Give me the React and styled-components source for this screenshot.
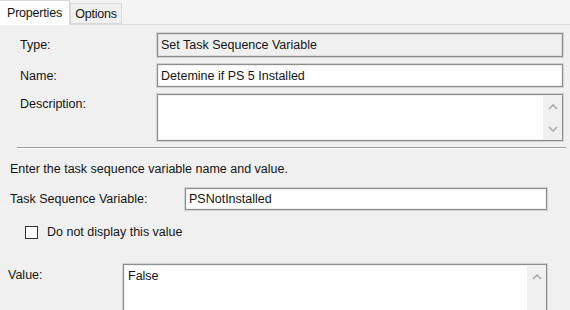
import React from 'react';
import styled, { createGlobalStyle } from 'styled-components';

const GlobalStyle = createGlobalStyle`
  html, body {
    margin: 0;
    padding: 0;
    background: #f0f0f0;
  }
  body {
    font-family: 'Liberation Sans', Arial, sans-serif;
    font-size: 12.5px;
    color: #141414;
  }
`;

const Window = styled.div`
  width: 570px;
  height: 310px;
  overflow: hidden;
  background: #f0f0f0;
`;

const TabStrip = styled.div`
  display: flex;
  align-items: flex-end;
  height: 24px;
  background: #f4f4f4;
  border-bottom: 1px solid #dadada;
`;

const Tab = styled.div`
  display: flex;
  align-items: center;
  justify-content: center;
  box-sizing: border-box;
  width: ${(p) => (p.$active ? '70px' : '52px')};
  height: ${(p) => (p.$active ? '25px' : '21px')};
  margin-bottom: ${(p) => (p.$active ? '-1px' : '0')};
  padding-top: ${(p) => (p.$active ? '0' : '1px')};
  background: ${(p) => (p.$active ? '#ffffff' : '#f0f0f0')};
  border: 1px solid #d9d9d9;
  border-bottom: ${(p) => (p.$active ? 'none' : '1px solid #d9d9d9')};
  border-left: ${(p) => (p.$active ? 'none' : '1px solid #d9d9d9')};
  letter-spacing: -0.2px;
`;

const Panel = styled.div`
  display: flex;
  flex-direction: column;
  padding-top: 8px;
`;

const FieldGrid = styled.div`
  display: grid;
  grid-template-columns: 137px 406px;
  row-gap: 7px;
  padding-left: 20px;
`;

const Label = styled.div`
  align-self: ${(p) => (p.$top ? 'start' : 'center')};
  padding-top: ${(p) => (p.$top ? '3px' : '0')};
  white-space: nowrap;
`;

const Box = styled.div`
  box-sizing: border-box;
  display: flex;
  align-items: ${(p) => (p.$multi ? 'flex-start' : 'center')};
  height: ${(p) => p.$h}px;
  width: ${(p) => (p.$w ? `${p.$w}px` : 'auto')};
  padding: ${(p) => (p.$multi ? '4px 0 0 4px' : '0 0 0 3px')};
  background: ${(p) => (p.$readOnly ? '#f0f0f0' : '#ffffff')};
  border: 1px solid #8e8e8e;
  box-shadow: inset 0 0 0 1px ${(p) => (p.$readOnly ? '#dedede' : '#f0f0f0')},
    0 0 0 1px #d2d2d2;
  white-space: nowrap;
`;

const BoxText = styled.span`
  flex: 1;
`;

const ScrollBar = styled.div`
  display: flex;
  flex-direction: column;
  justify-content: space-between;
  align-self: stretch;
  width: 19px;
  margin: -3px 0 0 0;
  background: #f0f0f0;
`;

const Arrow = styled.div`
  display: flex;
  align-items: center;
  justify-content: center;
  height: 22px;
`;

const Separator = styled.div`
  margin: 6px 4px 0 17px;
  height: 1px;
  background: #a0a0a0;
  border-bottom: 1px solid #ffffff;
`;

const Section = styled.div`
  display: flex;
  flex-direction: column;
  padding-left: 10px;
`;

const Intro = styled.div`
  margin-top: 13px;
  line-height: 14px;
`;

const Row = styled.div`
  display: flex;
  align-items: ${(p) => (p.$top ? 'flex-start' : 'center')};
  margin-top: ${(p) => p.$mt}px;
  margin-left: ${(p) => p.$ml || 0}px;
`;

const RowLabel = styled.div`
  width: ${(p) => p.$w}px;
  padding-top: ${(p) => p.$pt || 0}px;
  white-space: nowrap;
`;

const CheckBox = styled.span`
  box-sizing: border-box;
  width: 13px;
  height: 13px;
  margin-right: 9px;
  background: #ffffff;
  border: 1px solid #333333;
`;

const Chevron = ({ down }) => (
  <svg width="10" height="6" viewBox="0 0 10 6">
    <path
      d={down ? 'M1 1 L5 5 L9 1' : 'M1 5 L5 1 L9 5'}
      fill="none"
      stroke="#a9a9a9"
      strokeWidth="1.6"
    />
  </svg>
);

const App = () => {
  return (
    <>
      <GlobalStyle />
      <Window>
        <TabStrip>
          <Tab $active>Properties</Tab>
          <Tab>Options</Tab>
        </TabStrip>
        <Panel>
          <FieldGrid>
            <Label>Type:</Label>
            <Box $h={24} $readOnly>
              <BoxText>Set Task Sequence Variable</BoxText>
            </Box>
            <Label>Name:</Label>
            <Box $h={23}>
              <BoxText>Detemine if PS 5 Installed</BoxText>
            </Box>
            <Label $top>Description:</Label>
            <Box $h={47} $multi>
              <BoxText />
              <ScrollBar>
                <Arrow>
                  <Chevron />
                </Arrow>
                <Arrow>
                  <Chevron down />
                </Arrow>
              </ScrollBar>
            </Box>
          </FieldGrid>
          <Separator />
          <Section>
            <Intro>Enter the task sequence variable name and value.</Intro>
            <Row $mt={12}>
              <RowLabel $w={175}>Task Sequence Variable:</RowLabel>
              <Box $h={22} $w={362}>
                <BoxText>PSNotInstalled</BoxText>
              </Box>
            </Row>
            <Row $mt={15} $ml={15}>
              <CheckBox />
              <span>Do not display this value</span>
            </Row>
            <Row $mt={25} $ml={-2} $top>
              <RowLabel $w={115} $pt={4}>Value:</RowLabel>
              <Box $h={70} $w={424} $multi>
                <BoxText>False</BoxText>
                <ScrollBar>
                  <Arrow>
                    <Chevron />
                  </Arrow>
                </ScrollBar>
              </Box>
            </Row>
          </Section>
        </Panel>
      </Window>
    </>
  );
};

export default App;
